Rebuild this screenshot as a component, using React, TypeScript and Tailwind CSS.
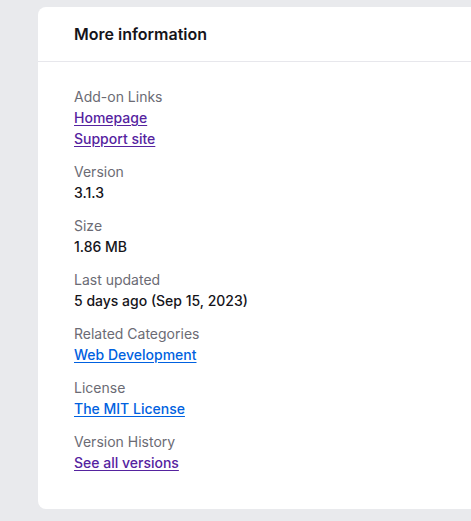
import React from "react";

type Item = {
  label: string;
  values: { text: string; href?: string; visited?: boolean }[];
};

const items: Item[] = [
  {
    label: "Add-on Links",
    values: [
      { text: "Homepage", href: "#", visited: true },
      { text: "Support site", href: "#", visited: true },
    ],
  },
  { label: "Version", values: [{ text: "3.1.3" }] },
  { label: "Size", values: [{ text: "1.86 MB" }] },
  { label: "Last updated", values: [{ text: "5 days ago (Sep 15, 2023)" }] },
  {
    label: "Related Categories",
    values: [{ text: "Web Development", href: "#" }],
  },
  { label: "License", values: [{ text: "The MIT License", href: "#" }] },
  {
    label: "Version History",
    values: [{ text: "See all versions", href: "#", visited: true }],
  },
];

export default function App() {
  return (
    <div
      className="min-h-[521px] bg-[#e9eaed] pt-[7px] pl-[38px] overflow-hidden"
      style={{ fontFamily: "Inter, 'Noto Sans', sans-serif" }}
    >
      <section className="w-[460px] bg-white rounded-lg">
        {/* Header */}
        <div className="px-9 py-[15px] border-b border-[#e7e7ec]">
          <h2 className="text-base leading-6 font-semibold text-[#15141a]">
            More information
          </h2>
        </div>

        {/* Details */}
        <dl className="px-9 pt-6 pb-9 flex flex-col gap-3">
          {items.map((item) => (
            <div key={item.label} className="text-sm leading-[21px]">
              <dt className="text-[#6b6b74]">{item.label}</dt>
              {item.values.map((v) => (
                <dd key={v.text}>
                  {v.href ? (
                    <a
                      href={v.href}
                      className={
                        v.visited
                          ? "font-medium underline underline-offset-2 text-[#55239f]"
                          : "font-medium underline underline-offset-2 text-[#0061e0]"
                      }
                    >
                      {v.text}
                    </a>
                  ) : (
                    <span className="font-medium text-[#15141a]">{v.text}</span>
                  )}
                </dd>
              ))}
            </div>
          ))}
        </dl>
      </section>
    </div>
  );
}
